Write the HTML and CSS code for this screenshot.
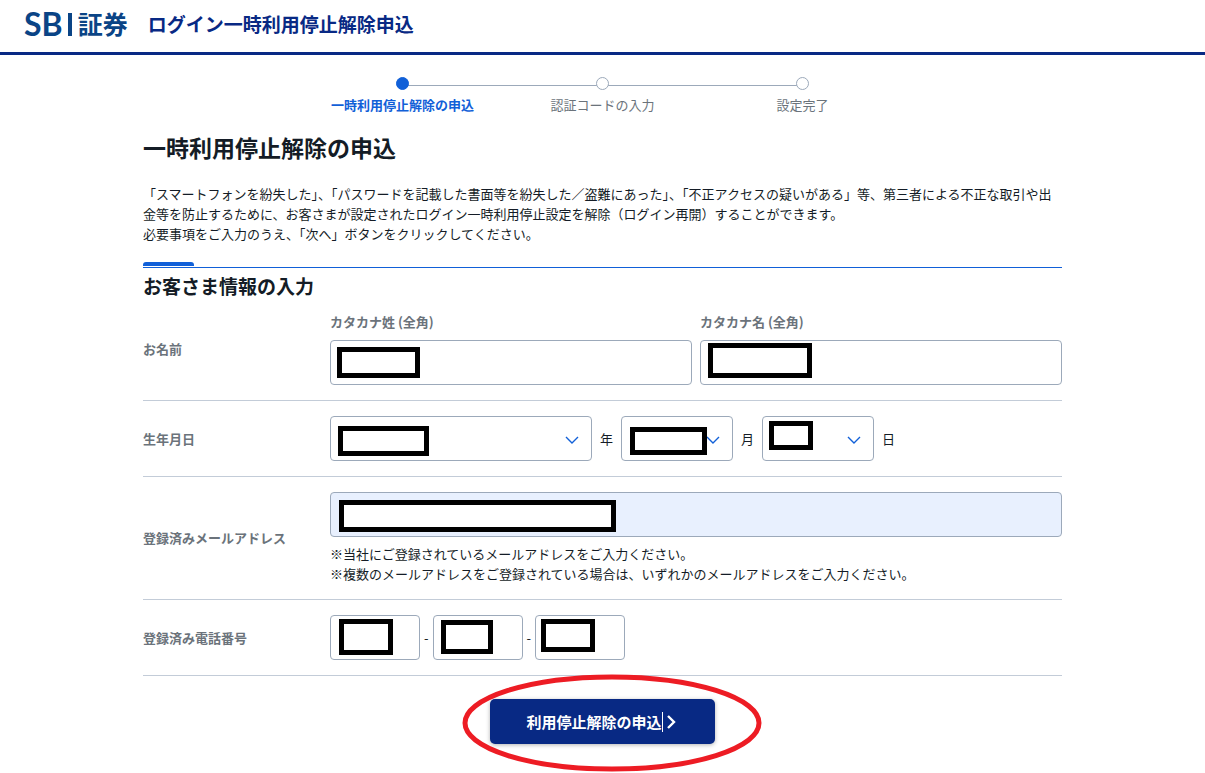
FILE: index.html
```html
<!DOCTYPE html>
<html lang="ja">
<head>
    <meta charset="UTF-8">
    <meta name="viewport" content="width=device-width, initial-scale=1.0">
    <title>ログイン一時利用停止解除申込</title>
    <link rel="stylesheet" href="styles.css">
</head>
<body>
    <header class="site-header">
        <div class="logo">
            <span class="logo-latin">SB</span>
            <span class="logo-bar"></span>
            <span class="logo-kanji">証券</span>
        </div>
        <p class="site-title">ログイン一時利用停止解除申込</p>
    </header>

    <main class="container">
        <ol class="steps">
            <li class="step current"><span class="dot"></span>一時利用停止解除の申込</li>
            <li class="step"><span class="dot"></span>認証コードの入力</li>
            <li class="step"><span class="dot"></span>設定完了</li>
        </ol>

        <h1>一時利用停止解除の申込</h1>
        <p class="lead">「スマートフォンを紛失した」、「パスワードを記載した書面等を紛失した／盗難にあった」、「不正アクセスの疑いがある」等、第三者による不正な取引や出金等を防止するために、お客さまが設定されたログイン一時利用停止設定を解除（ログイン再開）することができます。<br>必要事項をご入力のうえ、「次へ」ボタンをクリックしてください。</p>

        <h2>お客さま情報の入力</h2>

        <form>
            <div class="row row-first">
                <div class="row-label">お名前</div>
                <div class="names">
                    <div class="name">
                        <label for="sei">カタカナ姓 (全角)</label>
                        <div class="field">
                            <input type="text" id="sei">
                            <span class="mask mask-sei"></span>
                        </div>
                    </div>
                    <div class="name">
                        <label for="mei">カタカナ名 (全角)</label>
                        <div class="field">
                            <input type="text" id="mei">
                            <span class="mask mask-mei"></span>
                        </div>
                    </div>
                </div>
            </div>

            <div class="row">
                <div class="row-label">生年月日</div>
                <div class="birth">
                    <div class="field year">
                        <select id="year"><option></option></select>
                        <svg class="arrow" viewBox="0 0 14 8"><path d="M1 1l6 6 6-6"/></svg>
                        <span class="mask mask-year"></span>
                    </div>
                    <label for="year">年</label>
                    <div class="field month">
                        <select id="month"><option></option></select>
                        <svg class="arrow" viewBox="0 0 14 8"><path d="M1 1l6 6 6-6"/></svg>
                        <span class="mask mask-month"></span>
                    </div>
                    <label for="month">月</label>
                    <div class="field month">
                        <select id="day"><option></option></select>
                        <svg class="arrow" viewBox="0 0 14 8"><path d="M1 1l6 6 6-6"/></svg>
                        <span class="mask mask-day"></span>
                    </div>
                    <label for="day">日</label>
                </div>
            </div>

            <div class="row">
                <label class="row-label" for="email">登録済みメールアドレス</label>
                <div>
                    <div class="field">
                        <input type="email" id="email" class="filled">
                        <span class="mask mask-email"></span>
                    </div>
                    <p class="note">※当社にご登録されているメールアドレスをご入力ください。<br>※複数のメールアドレスをご登録されている場合は、いずれかのメールアドレスをご入力ください。</p>
                </div>
            </div>

            <div class="row">
                <label class="row-label" for="tel1">登録済み電話番号</label>
                <div class="tel">
                    <div class="field">
                        <input type="tel" id="tel1">
                        <span class="mask mask-tel1"></span>
                    </div>
                    <span>-</span>
                    <div class="field">
                        <input type="tel" aria-label="市内局番">
                        <span class="mask mask-tel2"></span>
                    </div>
                    <span>-</span>
                    <div class="field">
                        <input type="tel" aria-label="加入者番号">
                        <span class="mask mask-tel3"></span>
                    </div>
                </div>
            </div>

            <div class="submit">
                <button type="button">
                    <span class="caret">利用停止解除の申込</span>
                    <svg class="next" viewBox="0 0 10 14"><path d="M2 1l6 6-6 6"/></svg>
                </button>
                <svg class="circle" viewBox="0 0 300 98"><ellipse cx="150" cy="49" rx="147" ry="46"/></svg>
            </div>
        </form>
    </main>
</body>
</html>
```
FILE: styles.css
```css
* {
    box-sizing: border-box;
}

body {
    margin: 0;
    background-color: #fff;
    color: #141c26;
    font-family: "Noto Sans CJK JP", sans-serif;
    font-size: 13px;
    line-height: 20px;
}

/* Header */
.site-header {
    display: flex;
    align-items: center;
    gap: 20px;
    height: 55px;
    padding: 0 24px 4px;
    border-bottom: 3px solid #082984;
    color: #082984;
}

.logo {
    display: flex;
    align-items: center;
    color: #0a4486;
}

.logo-latin {
    font-family: Lato, sans-serif;
    font-size: 32px;
    font-weight: bold;
    line-height: 40px;
}

.logo-bar {
    width: 4px;
    height: 23px;
    margin: 0 6px 0 5px;
    background-color: #0a4486;
}

.logo-kanji {
    font-size: 25px;
    font-weight: bold;
    line-height: 36px;
    padding-bottom: 3px;
}

.site-title {
    margin: 0;
    font-size: 19px;
    font-weight: bold;
    line-height: 28px;
}

.container {
    max-width: 919px;
    margin: 0 auto;
    padding: 22px 0 28px;
}

/* Steps */
.steps {
    display: grid;
    grid-template-columns: repeat(3, 200px);
    justify-content: center;
    margin: 0;
    padding: 0;
    list-style: none;
    color: #6b737b;
}

.step {
    position: relative;
    display: flex;
    flex-direction: column;
    align-items: center;
    gap: 5px;
}

/* line joining a step to the one before it */
.step + .step::before {
    content: "";
    position: absolute;
    top: 8px;
    right: 50%;
    width: 100%;
    height: 1px;
    background-color: #9ca9ba;
}

.dot {
    position: relative;
    z-index: 1;
    width: 13px;
    height: 13px;
    border: 1px solid #9ca9ba;
    border-radius: 50%;
    background-color: #fff;
}

.current {
    color: #1160d8;
    font-weight: bold;
}

.current .dot {
    border-color: #1160d8;
    background-color: #1160d8;
}

h1 {
    margin: 15px 0 20px;
    font-size: 23px;
    font-weight: bold;
    line-height: 34px;
}

.lead {
    margin: 0 0 23px;
}

h2 {
    position: relative;
    margin: 0;
    padding-top: 4px;
    border-top: 1px solid #1160d8;
    font-size: 19px;
    font-weight: bold;
    line-height: 28px;
}

h2::before {
    content: "";
    position: absolute;
    top: -6px;
    left: 0;
    width: 51px;
    height: 4px;
    border-radius: 3px 3px 0 0;
    background-color: #1160d8;
}

/* Form rows */
.row {
    display: grid;
    grid-template-columns: 187px 1fr;
    align-items: center;
    padding: 15px 0;
    border-bottom: 1px solid #c3ccd8;
}

.row-first {
    padding-top: 12px;
}

.row-label,
.name label {
    color: #6b737b;
    font-weight: bold;
}

.names {
    display: grid;
    grid-template-columns: 1fr 1fr;
    gap: 8px;
}

.name label {
    display: block;
    margin-bottom: 8px;
}

.field {
    position: relative;
}

input,
select {
    display: block;
    width: 100%;
    height: 45px;
    padding: 0 12px;
    border: 1px solid #9ca9ba;
    border-radius: 4px;
    background-color: #fff;
    font: inherit;
    appearance: none;
}

.filled {
    background-color: #e8f0fe;
}

.birth {
    display: flex;
    align-items: center;
    gap: 8px;
}

.year {
    width: 262px;
}

.month {
    width: 112px;
}

.arrow {
    position: absolute;
    top: 20px;
    right: 13px;
    width: 14px;
    height: 8px;
    fill: none;
    stroke: #1160d8;
    stroke-width: 1.4;
}

.note {
    margin: 7px 0 0;
}

.tel {
    display: flex;
    align-items: center;
    gap: 4px;
}

.tel .field {
    width: 90px;
}

/* Boxes hiding the personal data */
.mask {
    position: absolute;
    border: 5px solid #000;
    background-color: #fff;
}

.mask-sei {
    top: 7px;
    left: 7px;
    width: 83px;
    height: 31px;
}

.mask-mei {
    top: 3px;
    left: 8px;
    width: 104px;
    height: 35px;
}

.mask-year {
    top: 10px;
    left: 8px;
    width: 91px;
    height: 30px;
}

.mask-month {
    top: 11px;
    left: 9px;
    width: 77px;
    height: 28px;
}

.mask-day {
    top: 5px;
    left: 7px;
    width: 44px;
    height: 29px;
}

.mask-email {
    top: 8px;
    left: 9px;
    width: 277px;
    height: 32px;
}

.mask-tel1 {
    top: 4px;
    left: 9px;
    width: 54px;
    height: 36px;
}

.mask-tel2 {
    top: 5px;
    left: 8px;
    width: 52px;
    height: 34px;
}

.mask-tel3 {
    top: 4px;
    left: 6px;
    width: 54px;
    height: 33px;
}

/* Submit */
.submit {
    position: relative;
    width: 225px;
    margin: 23px auto 0;
}

button {
    display: flex;
    align-items: center;
    justify-content: center;
    gap: 3px;
    width: 100%;
    height: 45px;
    padding: 0 3px 0 0;
    border: 0;
    border-radius: 5px;
    background-color: #082984;
    box-shadow: 0 1px 4px rgba(0, 0, 0, 0.3);
    color: #fff;
    font-family: inherit;
    font-size: 15px;
    font-weight: bold;
    line-height: 20px;
}

.caret {
    border-right: 1px solid #fff;
}

.next {
    width: 10px;
    height: 14px;
    fill: none;
    stroke: #fff;
    stroke-width: 2.4;
}

/* hand-drawn red ring round the button */
.circle {
    position: absolute;
    top: -25px;
    left: -28px;
    width: 300px;
    height: 98px;
    fill: none;
    stroke: #ed1c24;
    stroke-width: 5;
    pointer-events: none;
}
```
